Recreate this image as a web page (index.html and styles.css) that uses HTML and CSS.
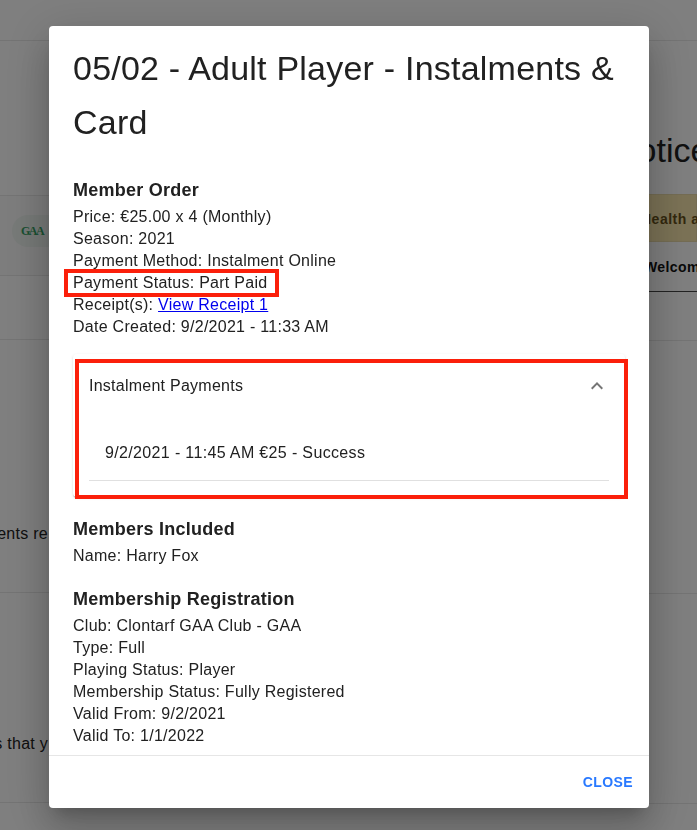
FILE: index.html
```html
<!DOCTYPE html>
<html lang="en">
<head>
    <meta charset="UTF-8">
    <meta name="viewport" content="width=device-width, initial-scale=1.0">
    <title>Member Order</title>
    <link rel="stylesheet" href="styles.css">
</head>
<body>
    <div class="page">
        <div class="page-col">
            <div class="band band-top"></div>
            <div class="band band-head"></div>
            <div class="band band-club">
                <div class="club-chip"><span class="club-logo">GAA</span></div>
            </div>
            <div class="band band-tabs"></div>
            <div class="band band-note"><div class="band-text"><span>Instalments re</span></div></div>
            <div class="band band-terms"><div class="band-text"><span>items that y</span></div></div>
        </div>
        <div class="page-col page-col-right">
            <div class="band band-top"></div>
            <div class="band band-notices"><h3 class="notices-title">Notices</h3></div>
            <div class="notice-alert">Health and Safety</div>
            <div class="notice-tabs">Welcome</div>
            <div class="band band-spacer"></div>
            <div class="band band-note"></div>
            <div class="band band-terms"></div>
        </div>
    </div>

    <div class="backdrop"></div>

    <div class="dialog">
        <h2 class="dialog-title">05/02 - Adult Player - Instalments &amp; Card</h2>
        <div class="dialog-content">
            <h6 class="section-title">Member Order</h6>
            <p class="line">Price: €25.00 x 4 (Monthly)</p>
            <p class="line">Season: 2021</p>
            <p class="line">Payment Method: Instalment Online</p>
            <p class="line line-marked">Payment Status: Part Paid</p>
            <p class="line">Receipt(s): <a href="#" class="receipt-link">View Receipt 1</a></p>
            <p class="line">Date Created: 9/2/2021 - 11:33 AM</p>

            <div class="accordion">
                <div class="accordion-summary">
                    <span>Instalment Payments</span>
                    <svg class="chevron" viewBox="0 0 24 24" width="24" height="24"><path d="M12 8l-6 6 1.41 1.41L12 10.83l4.59 4.58L18 14z"/></svg>
                </div>
                <div class="accordion-details">
                    <div class="payment-item">9/2/2021 - 11:45 AM €25 - Success</div>
                </div>
            </div>

            <h6 class="section-title section-members">Members Included</h6>
            <p class="line">Name: Harry Fox</p>

            <h6 class="section-title section-registration">Membership Registration</h6>
            <p class="line">Club: Clontarf GAA Club - GAA</p>
            <p class="line">Type: Full</p>
            <p class="line">Playing Status: Player</p>
            <p class="line">Membership Status: Fully Registered</p>
            <p class="line">Valid From: 9/2/2021</p>
            <p class="line">Valid To: 1/1/2022</p>
        </div>
        <div class="dialog-actions">
            <button type="button" class="close-button">Close</button>
        </div>
    </div>
</body>
</html>
```

FILE: styles.css
```css
html, body {
    height: 100%;
}
body {
    font-family: 'Liberation Sans', Arial, sans-serif;
    margin: 0;
    padding: 0;
    background-color: #fff;
    color: #212121;
    overflow: hidden;
}

/* page behind the dialog */
.page {
    display: grid;
    grid-template-columns: 340px 1fr;
    height: 830px;
}
.page-col {
    display: flex;
    flex-direction: column;
    min-width: 0;
}
.page-col-right {
    overflow: hidden;
}
.band {
    border-bottom: 1px solid #e8e8e8;
    box-sizing: border-box;
    flex: none;
}
.band-top {
    height: 41px;
}
.band-head {
    height: 155px;
}
.band-club {
    height: 80px;
    padding: 19px 0 0 12px;
    background-color: #fafafa;
}
.band-tabs {
    height: 64px;
}
.band-note {
    height: 253px;
    display: flex;
    align-items: flex-end;
    padding-bottom: 47px;
}
.band-terms {
    height: 210px;
    display: flex;
    align-items: flex-end;
    padding-bottom: 47px;
}
.band-text {
    display: flex;
    justify-content: flex-end;
    width: 48px;
    flex: none;
    white-space: nowrap;
    overflow: hidden;
    font-size: 16px;
    letter-spacing: 0.27px;
    line-height: 22px;
}
.band-text span {
    flex: none;
}
.club-chip {
    width: 120px;
    height: 32px;
    border-radius: 16px;
    background-color: #eef4f0;
    display: flex;
    align-items: center;
    padding-left: 9px;
}
.club-logo {
    font-family: 'Liberation Serif', serif;
    font-weight: 700;
    font-size: 12px;
    letter-spacing: -1.5px;
    color: #339f62;
}
.band-notices {
    height: 153px;
    border-bottom: none;
    padding: 88px 0 0 273px;
}
.notices-title {
    margin: 0;
    font-size: 34px;
    font-weight: 400;
    line-height: 42px;
    white-space: nowrap;
    color: #212121;
}
.notice-alert {
    flex: none;
    height: 48px;
    box-sizing: border-box;
    border: 1px solid #e8d9a8;
    margin-left: 250px;
    padding-left: 50px;
    background-color: #f7e5ac;
    color: #66501a;
    font-size: 14px;
    font-weight: 700;
    letter-spacing: 0.5px;
    line-height: 48px;
    white-space: nowrap;
}
.notice-tabs {
    flex: none;
    height: 50px;
    box-sizing: border-box;
    border-bottom: 1px solid #444;
    padding-left: 304px;
    font-size: 14px;
    font-weight: 700;
    letter-spacing: 0.4px;
    line-height: 50px;
    white-space: nowrap;
    color: #111;
}
.band-spacer {
    height: 49px;
}

.backdrop {
    position: fixed;
    inset: 0;
    background-color: rgba(0, 0, 0, 0.5);
}

/* dialog */
.dialog {
    position: fixed;
    left: 49px;
    top: 26px;
    width: 600px;
    height: 782px;
    display: flex;
    flex-direction: column;
    background-color: #fff;
    border-radius: 4px;
    box-shadow: 0 11px 15px -7px rgba(0, 0, 0, 0.2), 0 24px 38px 3px rgba(0, 0, 0, 0.14), 0 9px 46px 8px rgba(0, 0, 0, 0.12);
}
.dialog-title {
    margin: 0;
    padding: 15px 24px 0;
    font-size: 34px;
    font-weight: 400;
    line-height: 54px;
    letter-spacing: 0.22px;
    flex: none;
}
.dialog-content {
    flex: 1;
    overflow: hidden;
    padding: 28px 24px 0;
}
.section-title {
    margin: 0 0 3px;
    font-size: 18px;
    font-weight: 700;
    line-height: 26px;
    letter-spacing: 0.25px;
}
.section-members {
    margin-top: 19px;
}
.section-registration {
    margin-top: 19px;
}
.line {
    margin: 0;
    font-size: 16px;
    line-height: 22px;
    letter-spacing: 0.27px;
}
.line-marked {
    position: relative;
}
.line-marked::after {
    content: "";
    position: absolute;
    left: -9px;
    top: -3px;
    width: 207px;
    height: 20px;
    border: 4px solid #fb1f0a;
}
.receipt-link {
    color: #0000ee;
}
.accordion {
    position: relative;
    margin-top: 16px;
    border-radius: 4px;
    box-shadow: 0 2px 1px -1px rgba(0, 0, 0, 0.2), 0 1px 1px 0 rgba(0, 0, 0, 0.14), 0 1px 3px 0 rgba(0, 0, 0, 0.12);
}
.accordion::after {
    content: "";
    position: absolute;
    left: 2px;
    top: 5px;
    right: -3px;
    bottom: -2px;
    border: 4px solid #fb1f0a;
    pointer-events: none;
}
.accordion-summary {
    display: flex;
    align-items: center;
    justify-content: space-between;
    height: 64px;
    box-sizing: border-box;
    padding: 0 16px;
    font-size: 16px;
    letter-spacing: 0.25px;
}
.chevron {
    fill: #757575;
}
.accordion-details {
    padding: 8px 16px 16px;
}
.payment-item {
    padding: 16px 16px;
    border-bottom: 1px solid #e0e0e0;
    font-size: 16px;
    line-height: 22px;
    letter-spacing: 0.35px;
}
.dialog-actions {
    flex: none;
    display: flex;
    justify-content: flex-end;
    height: 53px;
    box-sizing: border-box;
    border-top: 1px solid #e6e6e6;
    align-items: center;
    padding: 0 16px;
}
.close-button {
    border: none;
    background: none;
    padding: 0;
    font-family: inherit;
    font-size: 14px;
    font-weight: 700;
    letter-spacing: 0.4px;
    text-transform: uppercase;
    color: #2979ff;
    cursor: pointer;
}
```
